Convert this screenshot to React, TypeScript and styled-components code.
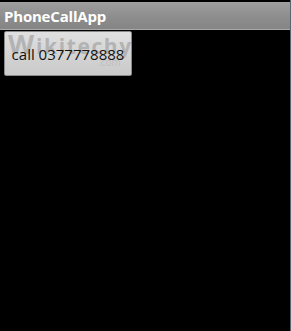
import styled, { createGlobalStyle } from "styled-components";

const Global = createGlobalStyle`
  html, body {
    margin: 0;
    padding: 0;
    background: #000;
  }

  #root {
    width: 291px;
    height: 331px;
  }
`;

const Screen = styled.div`
  display: flex;
  width: 291px;
  height: 331px;
  background: #000;
  overflow: hidden;
`;

const Main = styled.div`
  display: flex;
  flex-direction: column;
  flex: 1;
  padding-top: 2px;
  background: #000;
`;

const Edge = styled.div`
  width: 1px;
  background: #5d6670;
`;

const TitleBar = styled.header`
  height: 27px;
  display: flex;
  align-items: center;
  padding: 0 4px;
  background: linear-gradient(#9e9e9e, #8c8c8c 60%, #858585);
  border-bottom: 1px solid #a9a9a9;
  color: #fff;
  font: bold 15px "Open Sans", sans-serif;
  letter-spacing: -0.2px;
`;

const Body = styled.main`
  padding: 1px 4px;
`;

const CallButton = styled.button`
  position: relative;
  width: 128px;
  height: 45px;
  padding: 1px 0 0;
  border: 1px solid #8a8a8a;
  border-radius: 2px;
  background: linear-gradient(#e0e0e0, #d4d4d4 50%, #cacaca);
  color: #111;
  font: 15px "Open Sans", sans-serif;
  overflow: hidden;
`;

const Watermark = styled.span`
  position: absolute;
  left: 3px;
  top: -2px;
  display: flex;
  align-items: baseline;
  color: #b3b3b3;
  font: bold 21px/1 "Open Sans", sans-serif;
  letter-spacing: 1.6px;
  white-space: nowrap;
`;

const LogoW = styled.span`
  font-size: 27px;
  letter-spacing: 0;
  margin-right: 2px;
`;

const WatermarkDomain = styled.span`
  position: absolute;
  left: 93px;
  top: 25px;
  color: #bdbdbd;
  font: 10px/1 "Open Sans", sans-serif;
`;

const Label = styled.span`
  position: relative;
`;

export default function App() {
  return (
    <>
      <Global />
      <Screen>
        <Main>
          <TitleBar>PhoneCallApp</TitleBar>
          <Body>
            <CallButton>
              <Watermark>
                <LogoW>W</LogoW>ikitechy
              </Watermark>
              <WatermarkDomain>.com</WatermarkDomain>
              <Label>call 0377778888</Label>
            </CallButton>
          </Body>
        </Main>
        <Edge />
      </Screen>
    </>
  );
}
